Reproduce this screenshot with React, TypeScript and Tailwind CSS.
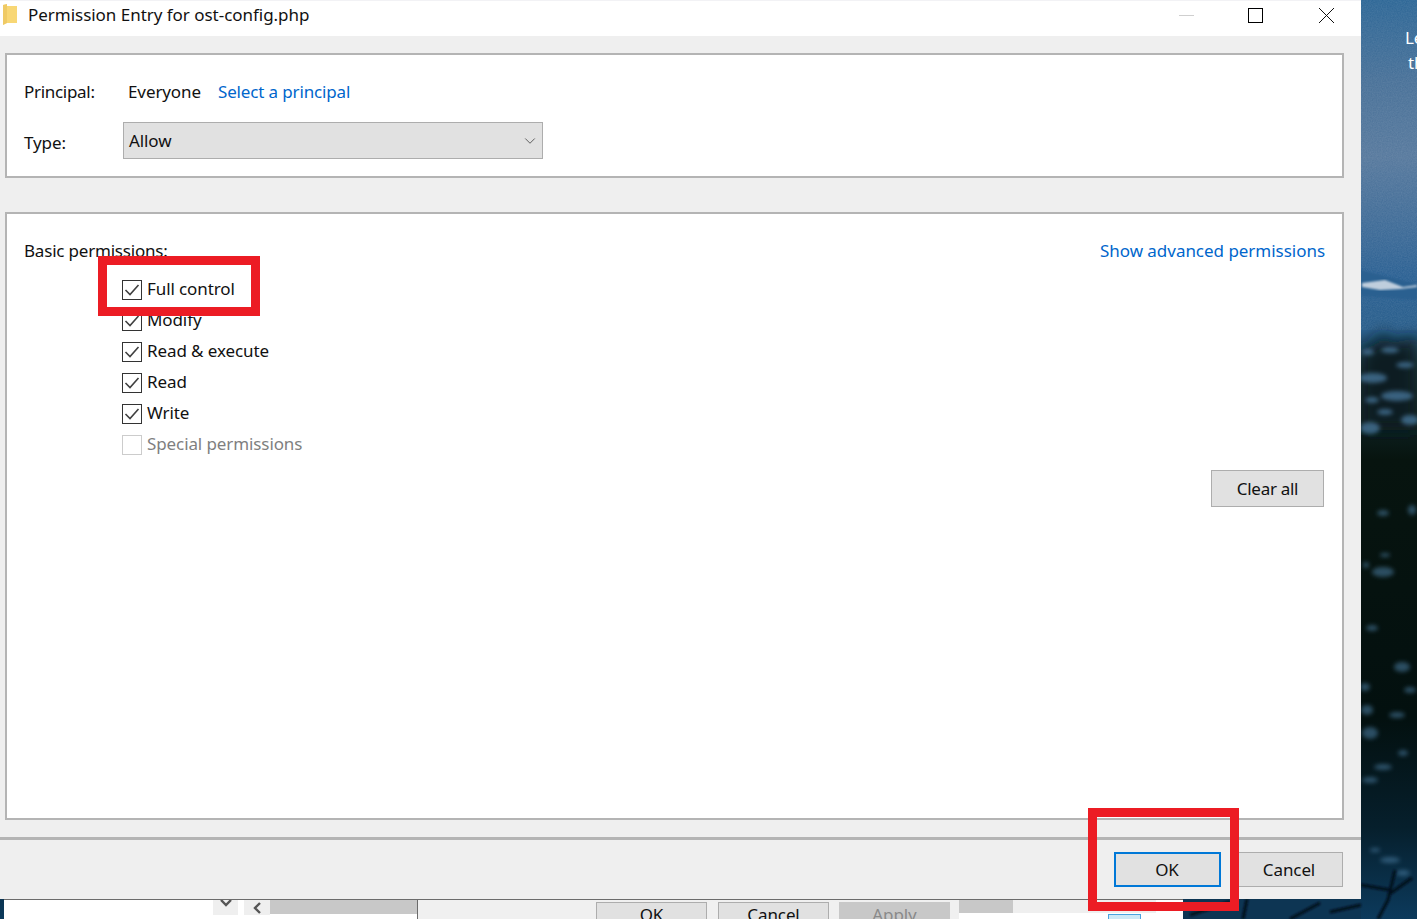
import { ChevronDown } from "lucide-react";

const font = "font-['Noto_Sans','Open_Sans',sans-serif]";

const permissions = [
  { label: "Full control", checked: true },
  { label: "Modify", checked: true },
  { label: "Read & execute", checked: true },
  { label: "Read", checked: true },
  { label: "Write", checked: true },
  { label: "Special permissions", checked: false },
];

// patches of sky seen through the tree on the wallpaper
const patches = [
  [1373, 378, 14, 5], [1397, 396, 16, 5], [1370, 428, 10, 6], [1390, 350, 9, 3], [1410, 420, 9, 5],
  [1368, 352, 6, 3], [1405, 365, 9, 3], [1385, 412, 8, 3], [1372, 400, 7, 3],
  [1383, 513, 6, 3], [1383, 572, 11, 5], [1372, 628, 6, 3], [1402, 667, 8, 5], [1365, 687, 5, 4],
  [1410, 690, 6, 3], [1367, 710, 6, 5], [1370, 733, 8, 6], [1397, 715, 8, 3], [1383, 767, 9, 3],
  [1403, 753, 5, 3], [1370, 780, 8, 3], [1390, 860, 10, 3], [1403, 873, 7, 3], [1375, 850, 5, 2],
  [1412, 510, 4, 5], [1385, 555, 5, 2], [1366, 565, 3, 3],
];

const Wallpaper = () => (
  <svg className="absolute inset-0 h-full w-full" viewBox="0 0 1417 919">
    <defs>
      <linearGradient id="sky" x1="0" y1="0" x2="0" y2="1">
        <stop offset="0" stopColor="#2f6897" />
        <stop offset="0.09" stopColor="#4a7299" />
        <stop offset="0.17" stopColor="#587a9e" />
        <stop offset="0.25" stopColor="#3f6c98" />
        <stop offset="0.3" stopColor="#2d6294" />
        <stop offset="0.36" stopColor="#2a5f8c" />
        <stop offset="0.4" stopColor="#16343e" />
        <stop offset="0.5" stopColor="#07140f" />
        <stop offset="0.78" stopColor="#03100f" />
        <stop offset="0.9" stopColor="#061f2c" />
        <stop offset="1" stopColor="#0c3a5c" />
      </linearGradient>
      <filter id="soft">
        <feGaussianBlur stdDeviation="1" />
      </filter>
      <filter id="blur">
        <feGaussianBlur stdDeviation="2.2" />
      </filter>
      <filter id="haze">
        <feGaussianBlur stdDeviation="8" />
      </filter>
      <filter id="grain">
        <feTurbulence type="fractalNoise" baseFrequency="0.8" numOctaves="2" />
        <feColorMatrix values="0 0 0 0 1  0 0 0 0 1  0 0 0 0 1  0 0 0 0.5 -0.1" />
      </filter>
    </defs>
    <rect width="1417" height="919" fill="url(#sky)" />
    <rect x="1361" width="56" height="300" filter="url(#grain)" opacity="0.25" />
    <path d="M1361 270 L1385 276 L1417 284 L1417 300 L1361 296 Z" fill="#2c6090" filter="url(#soft)" />
    <path d="M1362 283 L1385 280 L1403 287 L1417 285 L1417 287 L1400 289 L1380 290 L1362 287 Z" fill="#bfcedd" filter="url(#soft)" />
    <path d="M1361 350 L1375 345 L1383 330 L1391 345 L1405 340 L1417 336 L1417 430 L1361 430 Z" fill="#0a1f20" filter="url(#haze)" />
    <g filter="url(#blur)">
      {patches.map(([x, y, rx, ry], i) => (
        <ellipse key={i} cx={x} cy={y} rx={rx} ry={ry} fill="#4d7fa6" opacity={y < 450 ? 0.7 : 0.55} />
      ))}
    </g>
    <path d="M1183 899 H1361 V919 H1183 Z" fill="#0d3553" />
    <g filter="url(#soft)" stroke="#03101a" fill="none">
      <path d="M1395 870 L1388 900 L1378 919 M1388 895 L1412 878 M1361 885 L1390 890" strokeWidth="3" />
      <path d="M1190 915 L1230 902 M1243 919 L1247 899 M1290 919 L1320 903 M1330 912 L1361 905" strokeWidth="3" />
    </g>
  </svg>
);

const Folder = () => (
  <svg width="14" height="22" viewBox="0 0 14 22" className="ml-[3px] mt-[3px] shrink-0 self-start">
    <path d="M0 1 L4 0 V2 H14 V19 H4 L0 21 Z" fill="#f8d775" />
    <path d="M0 1 L4 0 V19 L0 21 Z" fill="#e9c15a" opacity="0.6" />
  </svg>
);

const PermissionRow = ({ label, checked }: { label: string; checked: boolean }) => (
  <label className={`flex h-[31px] items-start gap-[5px] pt-[5px] ${checked ? "text-[#111]" : "text-[#7f7f7f]"}`}>
    <span className={`flex h-5 w-5 shrink-0 items-center justify-center border bg-white ${checked ? "border-[#333]" : "border-[#ccc]"}`}>
      {checked && (
        <svg width="18" height="18" viewBox="0 0 18 18">
          <path d="M2.5 9 L7 13.5 L15.5 4" stroke="#404040" strokeWidth="1.6" fill="none" />
        </svg>
      )}
    </span>
    <span className="-mt-[3px] leading-[24px]">{label}</span>
  </label>
);

const DialogButton = ({ label, focused }: { label: string; focused?: boolean }) => (
  <button
    className={`h-[35px] w-[107px] bg-[#e1e1e1] text-[#111] ${
      focused ? "border-2 border-[#0078d7]" : "border border-[#adadad]"
    }`}
  >
    <span className="-ml-[1px]">{label}</span>
  </button>
);

export default function App() {
  return (
    <div className={`relative h-[919px] w-[1417px] overflow-hidden text-[17px] tracking-[-0.1px] text-[#111] ${font}`}>
      <Wallpaper />

      {/* text of the window behind, cut off by the screen edge */}
      <div className="absolute left-[1405px] top-[25px] text-[17px] leading-[25px] text-white">
        <div>Le</div>
        <div className="pl-[3px]">th</div>
      </div>

      <div className="relative flex h-[899px] w-[1361px] flex-col bg-[#efefef]">
        <div className="flex h-9 shrink-0 items-center border-t border-[#f2f2f5] bg-white">
          <Folder />
          <div className="ml-[11px] -mt-[7px] flex-1 tracking-[-0.03px]">Permission Entry for ost-config.php</div>
          <div className="flex h-[28px] items-center self-start pr-[27px]">
            <span className="mr-[54px] h-px w-[15px] bg-[#cfcfcf]" />
            <span className="mr-[56px] h-[15px] w-[15px] border border-black" />
            <svg width="15" height="15" viewBox="0 0 15 15">
              <path d="M0 0 L15 15 M15 0 L0 15" stroke="#111" strokeWidth="1" />
            </svg>
          </div>
        </div>

        <div className="ml-[5px] mt-[17px] h-[125px] w-[1339px] border-2 border-[#b4b4b4] bg-white px-[17px] pt-[23px]">
          <div className="flex h-[27px] items-center">
            <span className="w-[104px] tracking-[-0.3px]">Principal:</span>
            <span className="w-[90px]">Everyone</span>
            <span className="tracking-[-0.15px] text-[#0066cc]">Select a principal</span>
          </div>
          <div className="mt-[17px] flex items-center">
            <span className="w-[99px] pt-[5px]">Type:</span>
            <div className="flex h-[37px] w-[420px] items-center justify-between border border-[#adadad] bg-[#e1e1e1] pl-[5px] pr-[3px]">
              <span>Allow</span>
              <ChevronDown size={18} strokeWidth={1} color="#333" />
            </div>
          </div>
        </div>

        <div className="ml-[5px] mt-[34px] flex h-[608px] w-[1339px] flex-col border-2 border-[#b4b4b4] bg-white px-[17px] pt-[24px]">
          <div className="flex h-[26px] items-center justify-between">
            <span className="tracking-[-0.2px]">Basic permissions:</span>
            <span className="tracking-[-0.03px] text-[#0066cc]">Show advanced permissions</span>
          </div>
          <div className="ml-[98px] mt-[11px] flex flex-col">
            {permissions.map((p) => (
              <PermissionRow key={p.label} label={p.label} checked={p.checked} />
            ))}
          </div>
          <div className="mr-px mt-[9px] flex justify-end">
            <button className="h-[37px] w-[113px] border border-[#adadad] bg-[#e1e1e1] text-[#111]">
              <span className="tracking-[-0.3px]">Clear all</span>
            </button>
          </div>
        </div>

        <div className="mt-[17px] flex flex-1 justify-end gap-[15px] border-t-[3px] border-[#b4b4b4] pr-[18px] pt-3">
          <DialogButton label="OK" focused />
          <DialogButton label="Cancel" />
        </div>
      </div>

      {/* bits of the property window underneath */}
      <div className="relative flex h-5 w-[1183px] pl-[4px]">
        <div className="relative flex w-[413px] justify-start border-t border-[#6b6b6b] bg-white">
          <span className="ml-[209px] flex h-[15px] w-[25px] items-start justify-center bg-[#efefef]">
            <svg width="12" height="8" viewBox="0 0 12 8">
              <path d="M1 0 L6 5 L11 0" stroke="#555" strokeWidth="2.4" fill="none" />
            </svg>
          </span>
          <span className="ml-[6px] flex h-[15px] w-[26px] items-center justify-center bg-[#efefef]">
            <svg width="8" height="12" viewBox="0 0 8 12">
              <path d="M7 1 L2 6 L7 11" stroke="#555" strokeWidth="2.4" fill="none" />
            </svg>
          </span>
          <span className="h-[14px] flex-1 bg-[#c8c8c8]" />
        </div>
        <div className="flex w-[542px] border-l border-t border-[#6b6b6b] bg-[#f0f0f0] pl-[178px] pt-[2px] text-[#111]">
          <div className="h-[20px] w-[111px] border border-[#adadad] bg-[#e1e1e1] text-center leading-[24px]">OK</div>
          <div className="ml-[11px] h-[20px] w-[111px] border border-[#adadad] bg-[#e1e1e1] text-center leading-[24px]">Cancel</div>
          <div className="ml-[10px] h-[20px] w-[111px] border border-[#c8c8c8] bg-[#c8c8c8] text-center leading-[24px] text-[#8a8a8a]">Apply</div>
        </div>
        <div className="relative flex-1 bg-white">
          <div className="flex h-[14px] border-t border-[#6b6b6b]">
            <span className="w-[54px] bg-[#c8c8c8]" />
            <span className="w-[143px] bg-[#efefef]" />
          </div>
          <div className="ml-[149px] mt-px h-[5px] w-[33px] border border-b-0 border-[#4aa3df] bg-[#cce8f6]" />
        </div>
      </div>

      {/* red marks drawn on the screenshot */}
      <div className="absolute left-[98px] top-[256px] h-[60px] w-[162px] border-[9px] border-[#ec1c24]" />
      <div className="absolute left-[1088px] top-[808px] h-[103px] w-[151px] border-[9px] border-[#ec1c24]" />
    </div>
  );
}
